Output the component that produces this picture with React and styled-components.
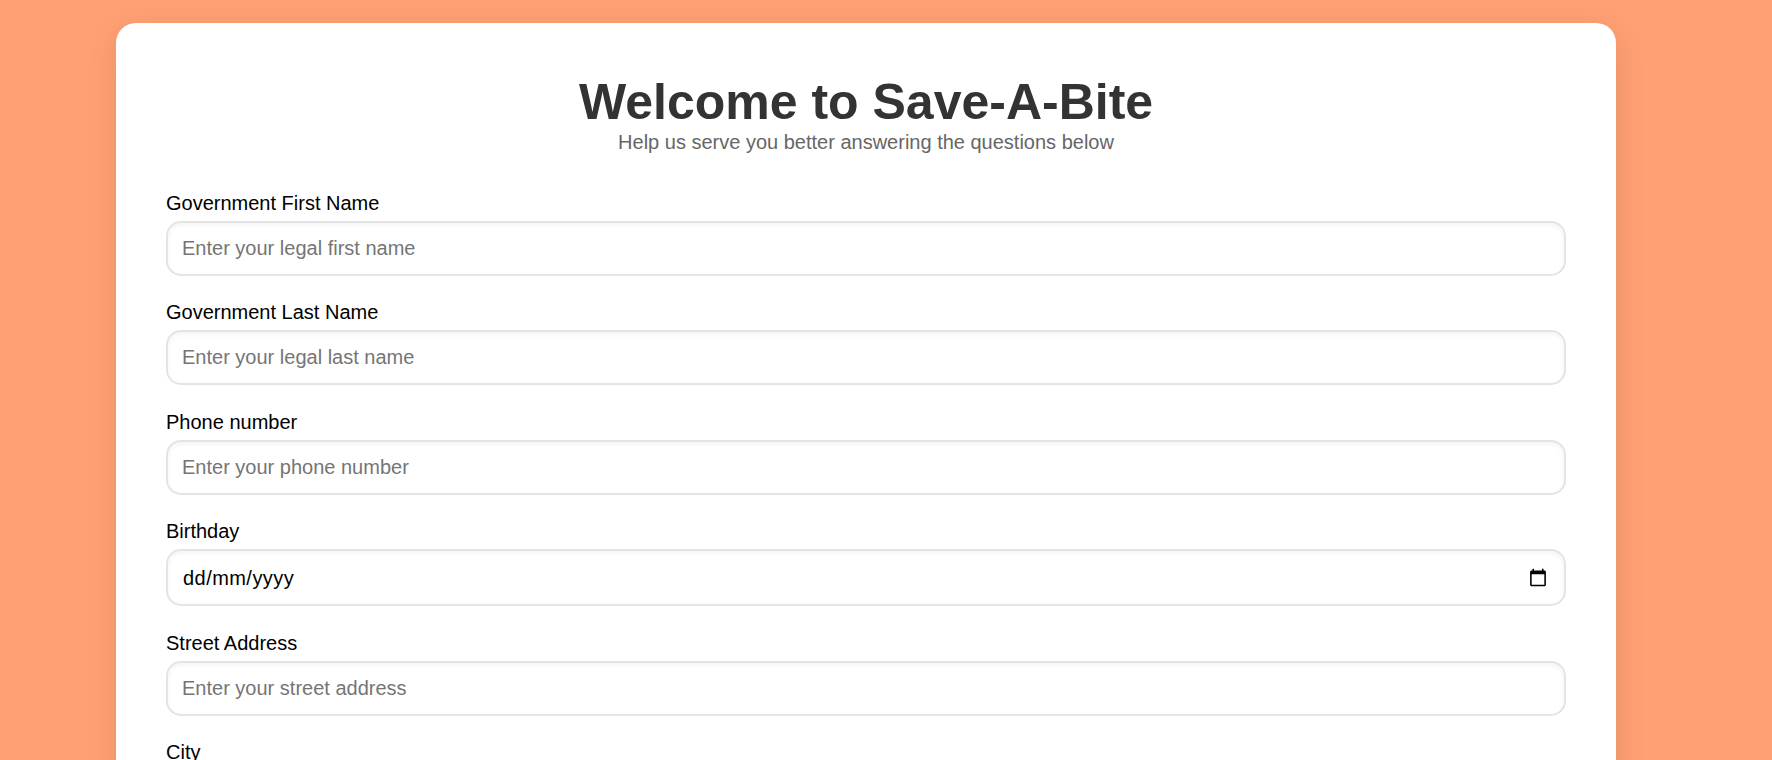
import React from "react";
import styled, { createGlobalStyle } from "styled-components";

const Global = createGlobalStyle`
  * { box-sizing: border-box; }
  html, body { margin: 0; padding: 0; background: #ffa073; }
  body { font-family: "Liberation Sans", Arial, sans-serif; padding: 23px 40px 40px 0; }
`;

const Card = styled.main`
  width: 1500px;
  margin: 0 auto;
  padding: 50px;
  background: #fff;
  border-radius: 20px;
  box-shadow: 0 8px 32px rgba(0, 0, 0, 0.1);
`;

const Header = styled.header`
  text-align: center;
  margin-bottom: 38px;
`;

const Title = styled.h1`
  margin: 0;
  font-size: 50px;
  line-height: 58px;
  font-weight: 700;
  color: #333;
`;

const Subtitle = styled.p`
  margin: 0;
  font-size: 20px;
  line-height: 23px;
  color: #666;
`;

const Form = styled.form`
  display: flex;
  flex-direction: column;
  gap: 25.4px;
`;

const Field = styled.div`
  display: flex;
  flex-direction: column;
  position: relative;
`;

const Label = styled.label`
  font-size: 20px;
  line-height: 23px;
  margin-bottom: 6px;
  color: #000;
`;

const Input = styled.input`
  width: 100%;
  padding: 14px;
  font: 20px "Liberation Sans", Arial, sans-serif;
  color: #000;
  background: #fff;
  border: 2px solid #e4e4e4;
  border-radius: 15px;
  box-shadow: inset 0 2px 5px rgba(0, 0, 0, 0.05);
  &::placeholder { color: #757575; opacity: 1; }
  &::-webkit-datetime-edit { visibility: hidden; }
`;

const DateHint = styled.span`
  position: absolute;
  left: 17px;
  bottom: 16px;
  font-size: 20px;
  line-height: 23px;
  letter-spacing: 0.45px;
  color: #000;
  pointer-events: none;
`;

const fields = [
  ["Government First Name", "text", "Enter your legal first name"],
  ["Government Last Name", "text", "Enter your legal last name"],
  ["Phone number", "tel", "Enter your phone number"],
  ["Birthday", "date", ""],
  ["Street Address", "text", "Enter your street address"],
  ["City", "text", "Enter your city"],
];

export default function App() {
  return (
    <>
      <Global />
      <Card>
        <Header>
          <Title>Welcome to Save-A-Bite</Title>
          <Subtitle>Help us serve you better answering the questions below</Subtitle>
        </Header>
        <Form>
          {fields.map(([label, type, placeholder]) => (
            <Field key={label}>
              <Label>{label}</Label>
              <Input type={type} placeholder={placeholder} />
              {type === "date" && <DateHint>dd/mm/yyyy</DateHint>}
            </Field>
          ))}
        </Form>
      </Card>
    </>
  );
}
